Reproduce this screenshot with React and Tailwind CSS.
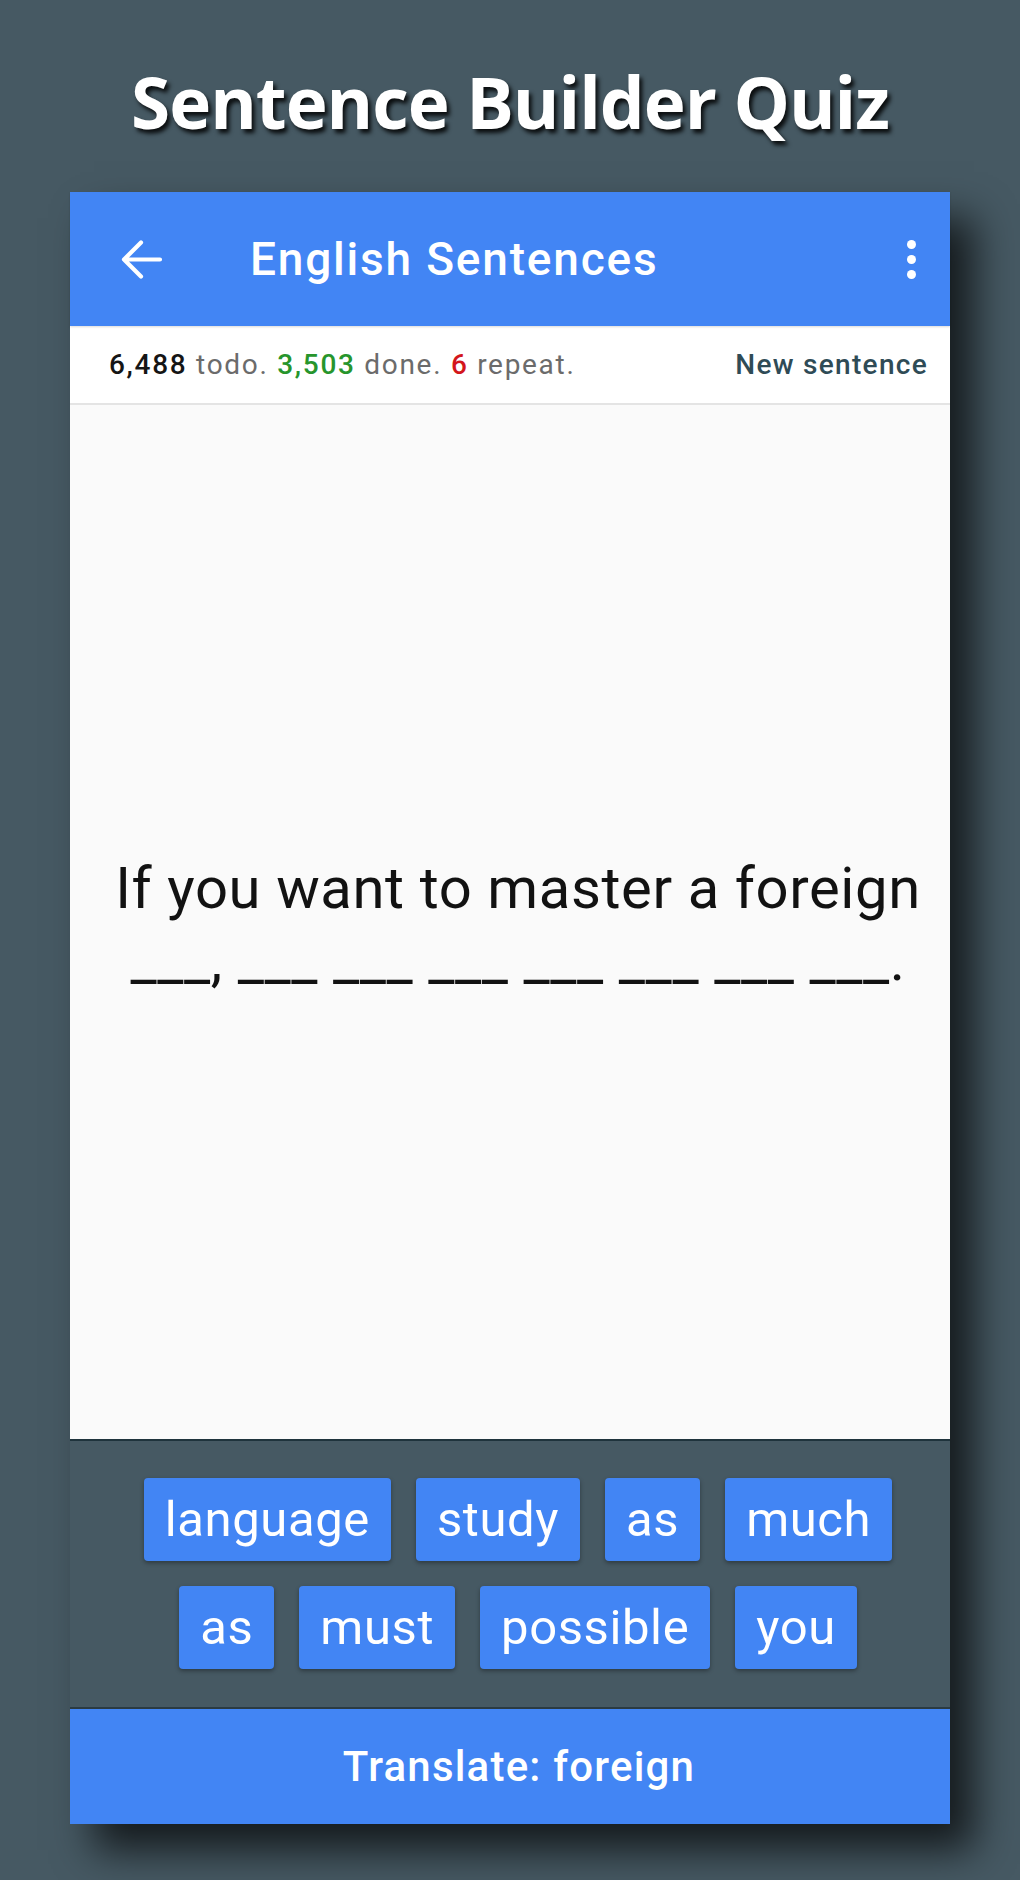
import React from "react";

const rowOne = ["language", "study", "as", "much"];
const rowTwo = ["as", "must", "possible", "you"];

const WordChip = ({ word }) => (
  <button className="h-[83px] px-[21px] rounded-[4px] bg-[#4285f4] text-white text-[49px] tracking-[0.6px] leading-none shadow-[0_2px_4px_rgba(0,0,0,0.35)]">
    {word}
  </button>
);

const App = () => {
  return (
    <div
      className="w-[1020px] h-[1880px] bg-[#465963] overflow-hidden flex flex-col items-center"
      style={{ fontFamily: "Roboto, 'Noto Sans', sans-serif" }}
    >
      <div className="h-[192px] pt-[66px] w-full flex justify-center">
        <h1
          className="text-[71px] leading-none font-bold text-white tracking-[-1px] [text-shadow:3px_4px_4px_rgba(0,0,0,0.85)]"
          style={{ fontFamily: "'Open Sans', 'Noto Sans', sans-serif" }}
        >
          Sentence Builder Quiz
        </h1>
      </div>

      <div className="w-[880px] flex flex-col shadow-[24px_26px_38px_rgba(0,0,0,0.7)]">
        {/* toolbar */}
        <div className="h-[134px] bg-[#4285f4] flex items-center relative z-10 shadow-[0_1px_2px_rgba(0,0,0,0.15)]">
          <svg
            className="ml-[50px]"
            width="43"
            height="41"
            viewBox="0 0 43 41"
            fill="none"
            stroke="white"
            strokeWidth="4.2"
            strokeLinecap="round"
            strokeLinejoin="round"
          >
            <path d="M40 20.5H4M21 3.5L4 20.5l17 17" />
          </svg>
          <span className="ml-[87px] text-white text-[46px] tracking-[1.8px] font-medium leading-none">
            English Sentences
          </span>
          <div className="ml-auto mr-[34px] flex flex-col gap-[6px]">
            <span className="w-[9px] h-[9px] rounded-full bg-white" />
            <span className="w-[9px] h-[9px] rounded-full bg-white" />
            <span className="w-[9px] h-[9px] rounded-full bg-white" />
          </div>
        </div>

        {/* stats */}
        <div className="h-[79px] bg-white flex items-center pl-[39px] pr-[22px] text-[28px] leading-none border-b-2 border-[#e4e4e4]">
          <span className="tracking-[1.7px]">
            <span className="font-medium text-[#151515]">6,488</span>
            <span className="text-[#6b6b6b]"> todo. </span>
            <span className="font-medium text-[#27952c]">3,503</span>
            <span className="text-[#6b6b6b]"> done. </span>
            <span className="font-medium text-[#d3161c]">6</span>
            <span className="text-[#6b6b6b]"> repeat.</span>
          </span>
          <span className="ml-auto font-medium tracking-[1.3px] text-[#2f4b56]">New sentence</span>
        </div>

        {/* sentence */}
        <div className="h-[1036px] bg-[#fafafa] flex items-center justify-center text-center pl-[16px] border-b-2 border-[#1f333c]">
          <p className="text-[58px] tracking-[0.6px] leading-[72px] text-[#121212] pt-[4px]">
            If you want to master a foreign
            <br />
            ___, ___ ___ ___ ___ ___ ___ ___.
          </p>
        </div>

        {/* word bank */}
        <div className="h-[268px] bg-[#465963] flex flex-col items-center justify-center gap-[25px] pl-[16px] pb-[2px] border-b-2 border-[#2b3b43]">
          <div className="flex gap-[25px]">
            {rowOne.map((w, i) => (
              <WordChip key={i} word={w} />
            ))}
          </div>
          <div className="flex gap-[25px]">
            {rowTwo.map((w, i) => (
              <WordChip key={i} word={w} />
            ))}
          </div>
        </div>

        <button className="h-[115px] bg-[#4285f4] text-white text-[42px] tracking-[1.2px] font-medium leading-none pl-[18px]">
          Translate: foreign
        </button>
      </div>
    </div>
  );
};

export default App;
